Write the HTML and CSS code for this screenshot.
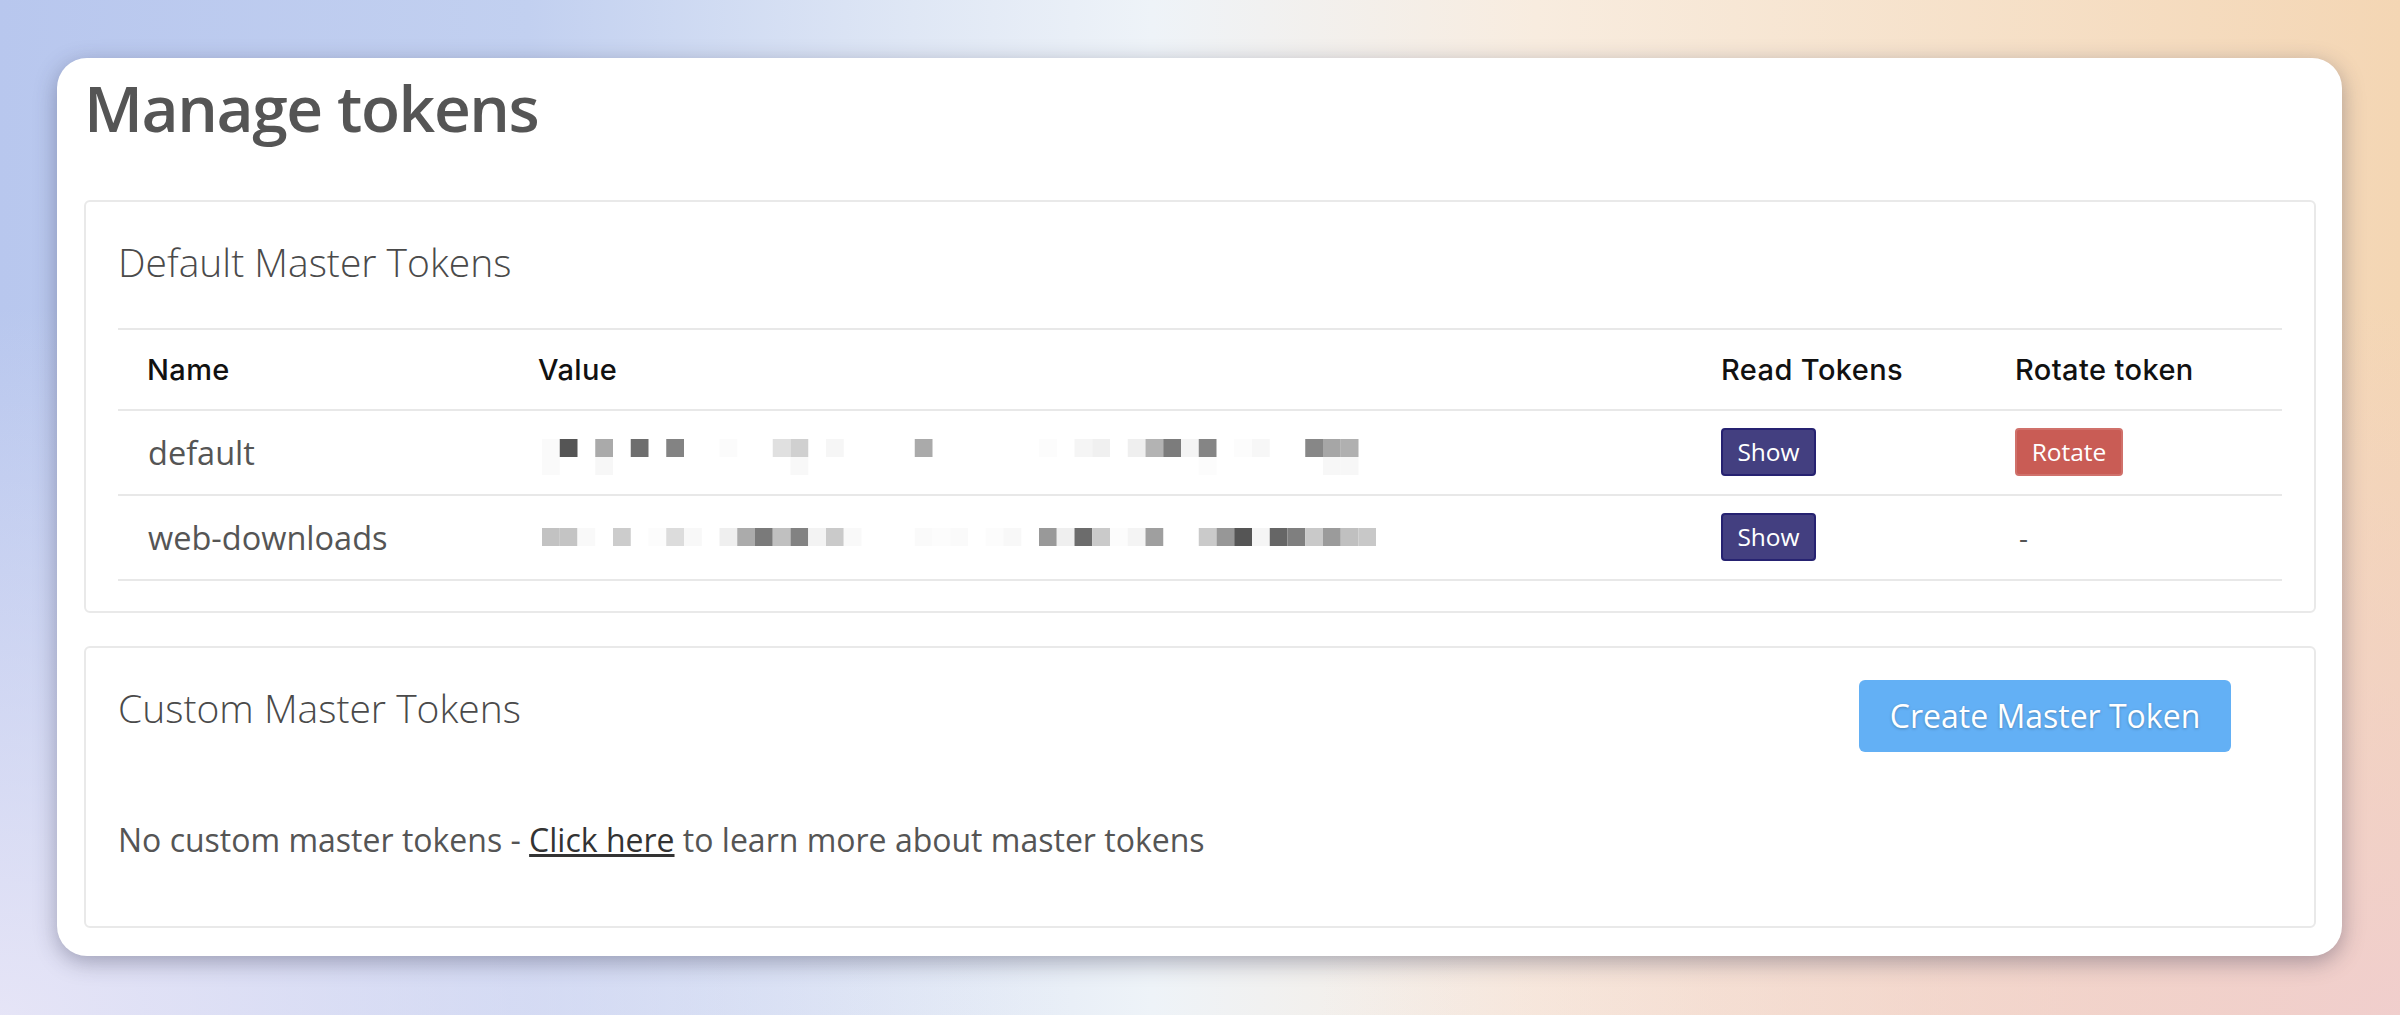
FILE: index.html
```html
<!DOCTYPE html>
<html lang="en">
<head>
<meta charset="utf-8">
<title>Manage tokens</title>
<link rel="stylesheet" href="styles.css">
</head>
<body>
<main class="card">
  <h1 class="page-title">Manage tokens</h1>

  <section class="panel panel-default">
    <h2 class="panel-title">Default Master Tokens</h2>
    <table class="tokens">
      <colgroup>
        <col class="c-name"><col class="c-value"><col class="c-read"><col class="c-rotate">
      </colgroup>
      <thead>
        <tr><th>Name</th><th>Value</th><th>Read Tokens</th><th>Rotate token</th></tr>
      </thead>
      <tbody>
        <tr>
          <td class="name">default</td>
          <td class="value">
            <svg class="mask mask-two" width="834" height="36" viewBox="0 0 834 36" aria-hidden="true">
              <g>
                <rect x="0" y="0" width="17.75" height="18" fill="#fafafa"/>
                <rect x="17.75" y="0" width="17.75" height="18" fill="#555555"/>
                <rect x="53.25" y="0" width="17.75" height="18" fill="#aaaaaa"/>
                <rect x="88.75" y="0" width="17.75" height="18" fill="#6e6e6e"/>
                <rect x="124.25" y="0" width="17.75" height="18" fill="#838383"/>
                <rect x="177.5" y="0" width="17.75" height="18" fill="#fbfbfb"/>
                <rect x="230.75" y="0" width="17.75" height="18" fill="#e0e0e0"/>
                <rect x="248.5" y="0" width="17.75" height="18" fill="#d0d0d0"/>
                <rect x="284" y="0" width="17.75" height="18" fill="#f6f6f6"/>
                <rect x="372.75" y="0" width="17.75" height="18" fill="#aaaaaa"/>
                <rect x="497" y="0" width="17.75" height="18" fill="#fcfcfc"/>
                <rect x="532.5" y="0" width="17.75" height="18" fill="#f5f5f5"/>
                <rect x="550.25" y="0" width="17.75" height="18" fill="#f0f0f0"/>
                <rect x="585.75" y="0" width="17.75" height="18" fill="#efefef"/>
                <rect x="603.5" y="0" width="17.75" height="18" fill="#b3b3b3"/>
                <rect x="621.25" y="0" width="17.75" height="18" fill="#7c7c7c"/>
                <rect x="639" y="0" width="17.75" height="18" fill="#f4f4f4"/>
                <rect x="656.75" y="0" width="17.75" height="18" fill="#858585"/>
                <rect x="692.25" y="0" width="17.75" height="18" fill="#fcfcfc"/>
                <rect x="710" y="0" width="17.75" height="18" fill="#f7f7f7"/>
                <rect x="763.25" y="0" width="17.75" height="18" fill="#878787"/>
                <rect x="781" y="0" width="17.75" height="18" fill="#a6a6a6"/>
                <rect x="798.75" y="0" width="17.75" height="18" fill="#b0b0b0"/>
                <rect x="0" y="18" width="17.75" height="18" fill="#fafafa"/>
                <rect x="53.25" y="18" width="17.75" height="18" fill="#f7f7f7"/>
                <rect x="248.5" y="18" width="17.75" height="18" fill="#f8f8f8"/>
                <rect x="656.75" y="18" width="17.75" height="18" fill="#fcfcfc"/>
                <rect x="781" y="18" width="17.75" height="18" fill="#f7f7f7"/>
                <rect x="798.75" y="18" width="17.75" height="18" fill="#f7f7f7"/>
              </g>
            </svg>
          </td>
          <td><button class="btn btn-show" type="button">Show</button></td>
          <td><button class="btn btn-rotate" type="button">Rotate</button></td>
        </tr>
        <tr>
          <td class="name">web-downloads</td>
          <td class="value">
            <svg class="mask" width="834" height="18" viewBox="0 0 834 18" aria-hidden="true">
              <g>
                <rect x="0" y="0" width="17.75" height="18" fill="#c2c2c2"/>
                <rect x="17.75" y="0" width="17.75" height="18" fill="#c4c4c4"/>
                <rect x="35.5" y="0" width="17.75" height="18" fill="#f9f9f9"/>
                <rect x="71" y="0" width="17.75" height="18" fill="#cccccc"/>
                <rect x="106.5" y="0" width="17.75" height="18" fill="#fcfcfc"/>
                <rect x="124.25" y="0" width="17.75" height="18" fill="#dcdcdc"/>
                <rect x="142" y="0" width="17.75" height="18" fill="#f8f8f8"/>
                <rect x="177.5" y="0" width="17.75" height="18" fill="#efefef"/>
                <rect x="195.25" y="0" width="17.75" height="18" fill="#ababab"/>
                <rect x="213" y="0" width="17.75" height="18" fill="#7a7a7a"/>
                <rect x="230.75" y="0" width="17.75" height="18" fill="#c0c0c0"/>
                <rect x="248.5" y="0" width="17.75" height="18" fill="#828282"/>
                <rect x="266.25" y="0" width="17.75" height="18" fill="#f3f3f3"/>
                <rect x="284" y="0" width="17.75" height="18" fill="#cacaca"/>
                <rect x="301.75" y="0" width="17.75" height="18" fill="#f9f9f9"/>
                <rect x="372.75" y="0" width="17.75" height="18" fill="#fafafa"/>
                <rect x="390.5" y="0" width="17.75" height="18" fill="#fcfcfc"/>
                <rect x="408.25" y="0" width="17.75" height="18" fill="#fafafa"/>
                <rect x="443.75" y="0" width="17.75" height="18" fill="#fcfcfc"/>
                <rect x="461.5" y="0" width="17.75" height="18" fill="#f8f8f8"/>
                <rect x="497" y="0" width="17.75" height="18" fill="#999999"/>
                <rect x="514.75" y="0" width="17.75" height="18" fill="#efefef"/>
                <rect x="532.5" y="0" width="17.75" height="18" fill="#6c6c6c"/>
                <rect x="550.25" y="0" width="17.75" height="18" fill="#cacaca"/>
                <rect x="568" y="0" width="17.75" height="18" fill="#fcfcfc"/>
                <rect x="585.75" y="0" width="17.75" height="18" fill="#f4f4f4"/>
                <rect x="603.5" y="0" width="17.75" height="18" fill="#9f9f9f"/>
                <rect x="656.75" y="0" width="17.75" height="18" fill="#cacaca"/>
                <rect x="674.5" y="0" width="17.75" height="18" fill="#979797"/>
                <rect x="692.25" y="0" width="17.75" height="18" fill="#555555"/>
                <rect x="710" y="0" width="17.75" height="18" fill="#f5f5f5"/>
                <rect x="727.75" y="0" width="17.75" height="18" fill="#666666"/>
                <rect x="745.5" y="0" width="17.75" height="18" fill="#7f7f7f"/>
                <rect x="763.25" y="0" width="17.75" height="18" fill="#c9c9c9"/>
                <rect x="781" y="0" width="17.75" height="18" fill="#9b9b9b"/>
                <rect x="798.75" y="0" width="17.75" height="18" fill="#c0c0c0"/>
                <rect x="816.5" y="0" width="17.75" height="18" fill="#c8c8c8"/>
              </g>
            </svg>
          </td>
          <td><button class="btn btn-show" type="button">Show</button></td>
          <td class="dash">-</td>
        </tr>
      </tbody>
    </table>
  </section>

  <section class="panel panel-custom">
    <div class="panel-head">
      <h2 class="panel-title">Custom Master Tokens</h2>
      <button class="btn-create" type="button">Create Master Token</button>
    </div>
    <p class="empty">No custom master tokens - <a href="#" class="learn">Click here</a> to learn more about master tokens</p>
  </section>
</main>
</body>
</html>
```

FILE: styles.css
```css
* { box-sizing: border-box; }

html, body { height: 100%; }

body {
  margin: 0;
  padding: 58px 58px 0 57px;
  font-family: "Open Sans", "Liberation Sans", sans-serif;
  color: #555555;
  background:
    radial-gradient(ellipse 45% 70% at 0% 100%, rgba(232, 230, 247, 0.95) 0%, rgba(232, 230, 247, 0) 100%),
    radial-gradient(ellipse 45% 70% at 100% 100%, rgba(240, 206, 206, 0.95) 0%, rgba(240, 206, 206, 0) 100%),
    linear-gradient(90deg, #b8c7ee 0%, #c2d0f0 22%, #dfe7f5 38%, #eef3f8 48%, #f8ecdf 64%, #f4d6b4 100%);
}

.card {
  background: #ffffff;
  border-radius: 30px;
  padding: 9.5px 26px 28px 27px;
  box-shadow: 0 6px 22px rgba(50, 50, 80, 0.38);
}

.page-title {
  margin: 0;
  font-size: 64px;
  line-height: 80px;
  font-weight: 600;
  letter-spacing: -1.4px;
  color: #555555;
}

.panel {
  border: 2px solid #e9e9e9;
  border-radius: 6px;
  padding: 32px 32px 30px;
}

.panel-default { margin-top: 52.5px; }

.panel-custom {
  margin-top: 33px;
  padding-bottom: 64px;
}

.panel-title {
  margin: 7.6px 0 0;
  font-size: 39px;
  line-height: 40px;
  font-weight: 300;
  color: #4a4a4a;
}

.tokens {
  margin-top: 46.4px;
  width: 100%;
  table-layout: fixed;
  border-collapse: collapse;
}

.c-name { width: 391px; }
.c-value { width: 1183px; }
.c-read { width: 294px; }
.c-rotate { width: 296px; }

.tokens th,
.tokens td {
  padding: 0 0 0 29px;
  text-align: left;
  vertical-align: middle;
  border-top: 2px solid #e8e8e8;
}

.tokens th {
  height: 81px;
  font-family: Inter, "Liberation Sans", sans-serif;
  font-size: 29px;
  font-weight: 500;
  letter-spacing: 0.4px;
  color: #111111;
}

.tokens td {
  height: 85px;
  font-size: 32.5px;
  font-weight: 400;
  color: #555555;
}

.tokens tbody tr:last-child td { border-bottom: 2px solid #e8e8e8; }

.tokens td.name { padding-left: 30px; }

.mask {
  display: block;
  margin-left: 4px;
}

.mask-two { margin-top: 9px; }

.tokens td.dash {
  padding-left: 33px;
  font-size: 28px;
}

.btn {
  display: block;
  height: 48px;
  padding: 0;
  border-radius: 4px;
  font-family: "Open Sans", "Liberation Sans", sans-serif;
  font-size: 24.5px;
  line-height: 44px;
  color: #ffffff;
  cursor: pointer;
}

.btn-show {
  width: 95px;
  background: #433f80;
  border: 2px solid #262271;
}

.btn-rotate {
  width: 108px;
  background: #c95c55;
  border: 2px solid #d0716b;
}

.panel-head {
  display: flex;
  justify-content: space-between;
  align-items: flex-start;
}

.btn-create {
  width: 372px;
  height: 72px;
  margin-right: 51px;
  padding: 0;
  border: none;
  border-radius: 6px;
  background: #63b0f5;
  color: #ffffff;
  font-family: "Open Sans", "Liberation Sans", sans-serif;
  font-size: 32px;
  line-height: 72px;
  text-shadow: 0 1px 3px rgba(0, 0, 0, 0.25);
  cursor: pointer;
}

.empty {
  margin: 65.6px 0 0;
  font-size: 32px;
  line-height: 44px;
  color: #555555;
}

.learn {
  color: #333333;
  text-decoration: underline;
}
```
